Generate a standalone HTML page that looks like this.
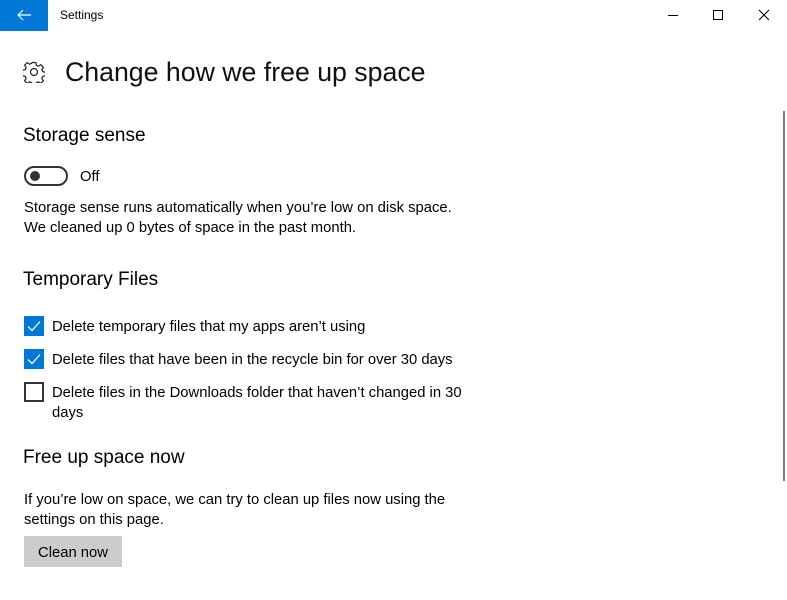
<!DOCTYPE html>
<html><head><style>
*{margin:0;padding:0;box-sizing:border-box}
body{width:787px;height:600px;background:#fff;font-family:"Liberation Sans",sans-serif;color:#000;position:relative;overflow:hidden}
.a{position:absolute;white-space:nowrap}
.t{font-size:14.8px}
.h{font-size:19px}
.cb{position:absolute;left:24px;width:20px;height:20px;background:#0078d7}
.cb.off{background:#fff;border:2px solid #333}
</style></head><body>
<div class="a" style="left:0;top:0;width:48px;height:31px;background:#0078d7"></div>
<svg class="a" style="left:16px;top:8px" width="16" height="14" viewBox="0 0 16 14"><path d="M15 7H2M7 2L2 7l5 5" stroke="#fff" stroke-width="1.2" fill="none"/></svg>
<div class="a" style="left:60px;top:8px;font-size:12px">Settings</div>
<div class="a" style="left:668px;top:15px;width:10px;height:1px;background:#000"></div>
<div class="a" style="left:713px;top:10px;width:10px;height:10px;border:1px solid #000"></div>
<svg class="a" style="left:758px;top:9px" width="12" height="12"><path d="M1 1L11 11M11 1L1 11" stroke="#000" stroke-width="1"/></svg>
<svg class="a" style="left:23px;top:61px" width="22" height="22" viewBox="0 0 22 22"><g fill="none" stroke="#222" stroke-width="1.2"><path d="M9.2 1.5h3.6l.6 2.8 2 .9 2.4-1.6 2.6 2.6-1.6 2.4.9 2 2.8.6v3.6l-2.8.6-.9 2 1.6 2.4-2.6 2.6-2.4-1.6-2 .9-.6 2.8H9.2l-.6-2.8-2-.9-2.4 1.6-2.6-2.6 1.6-2.4-.9-2-2.8-.6V9.2l2.8-.6.9-2-1.6-2.4 2.6-2.6 2.4 1.6 2-.9z"/><circle cx="11" cy="11" r="3.5"/></g></svg>
<div class="a" style="left:65px;top:57px;font-size:26.7px;color:#111">Change how we free up space</div>
<div class="a" style="left:783px;top:111px;width:2px;height:370px;background:#7a7a7a"></div>
<div class="a h" style="left:23px;top:125px">Storage sense</div>
<div class="a" style="left:24px;top:166px;width:44px;height:20px;border:2px solid #333;border-radius:10px"></div>
<div class="a" style="left:30px;top:171px;width:10px;height:10px;border-radius:5px;background:#333"></div>
<div class="a t" style="left:80px;top:169px">Off</div>
<div class="a t" style="left:24px;top:200px">Storage sense runs automatically when you’re low on disk space.</div>
<div class="a t" style="left:24px;top:220px">We cleaned up 0 bytes of space in the past month.</div>
<div class="a h" style="left:23px;top:269px">Temporary Files</div>
<div class="cb" style="top:316px"><svg width="20" height="20"><path d="M4 10.5l4 4 8-9" stroke="#fff" stroke-width="1.3" fill="none"/></svg></div>
<div class="a t" style="left:52px;top:319px">Delete temporary files that my apps aren’t using</div>
<div class="cb" style="top:349px"><svg width="20" height="20"><path d="M4 10.5l4 4 8-9" stroke="#fff" stroke-width="1.3" fill="none"/></svg></div>
<div class="a t" style="left:52px;top:352px">Delete files that have been in the recycle bin for over 30 days</div>
<div class="cb off" style="top:382px"></div>
<div class="a t" style="left:52px;top:385px">Delete files in the Downloads folder that haven’t changed in 30</div>
<div class="a t" style="left:52px;top:405px">days</div>
<div class="a h" style="left:23px;top:447px">Free up space now</div>
<div class="a t" style="left:24px;top:492px">If you’re low on space, we can try to clean up files now using the</div>
<div class="a t" style="left:24px;top:512px">settings on this page.</div>
<div class="a t" style="left:24px;top:536px;width:98px;height:31px;background:#ccc;text-align:center;line-height:34px">Clean now</div>
</body></html>
